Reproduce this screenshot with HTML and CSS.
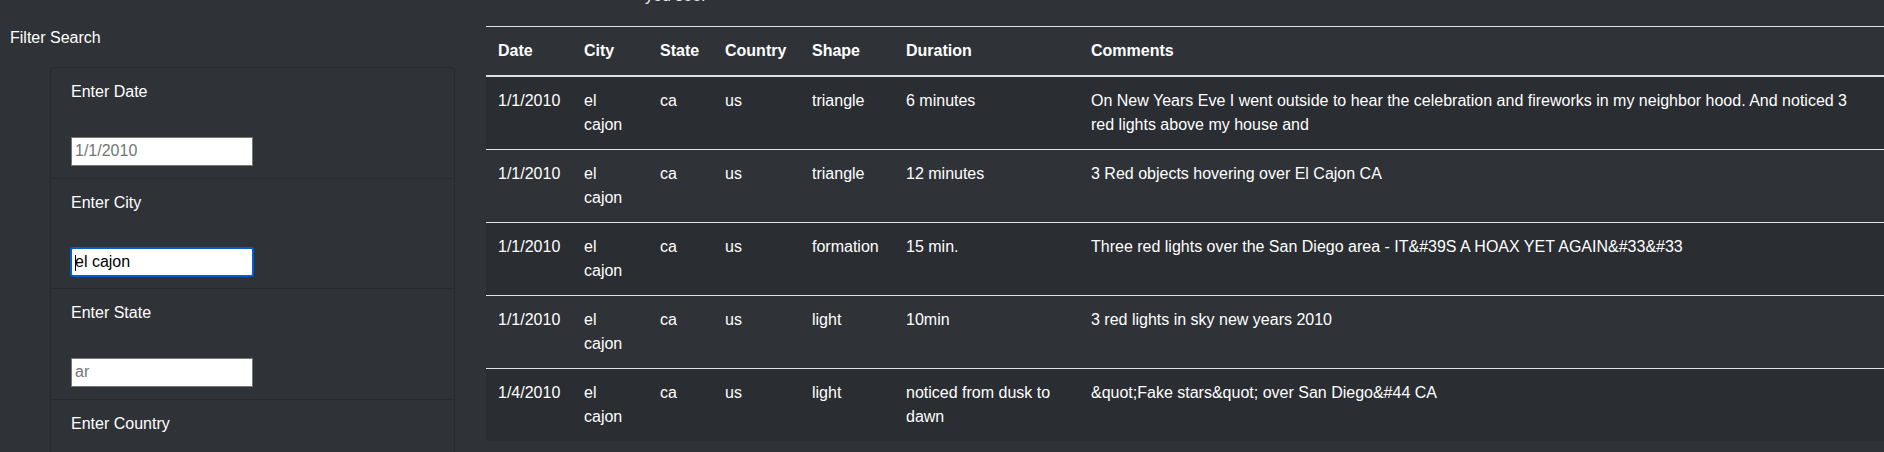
FILE: index.html
```html
<!DOCTYPE html>
<html lang="en">
<head>
<meta charset="utf-8">
<title>UFO Sightings</title>
<link rel="stylesheet" href="styles.css">
</head>
<body>
<div class="page">
  <aside class="sidebar">
    <div class="sidebar-title">Filter Search</div>
    <ul class="filters">
      <li class="filter-item">
        <label class="filter-label" for="datetime">Enter Date</label>
        <input class="filter-input" id="datetime" type="text" placeholder="1/1/2010">
      </li>
      <li class="filter-item">
        <label class="filter-label" for="city">Enter City</label>
        <div class="input-wrap">
          <input class="filter-input focused" id="city" type="text" value="el cajon">
          <span class="caret"></span>
        </div>
      </li>
      <li class="filter-item">
        <label class="filter-label" for="state">Enter State</label>
        <input class="filter-input" id="state" type="text" placeholder="ar">
      </li>
      <li class="filter-item">
        <label class="filter-label" for="country">Enter Country</label>
        <input class="filter-input" id="country" type="text" placeholder="us">
      </li>
    </ul>
  </aside>
  <main class="content">
    <p class="intro">you see.</p>
    <table class="ufo-table">
      <colgroup>
        <col class="c-date"><col class="c-city"><col class="c-state"><col class="c-country"><col class="c-shape"><col class="c-duration"><col class="c-comments">
      </colgroup>
      <thead>
        <tr><th>Date</th><th>City</th><th>State</th><th>Country</th><th>Shape</th><th>Duration</th><th>Comments</th></tr>
      </thead>
      <tbody>
        <tr><td>1/1/2010</td><td>el cajon</td><td>ca</td><td>us</td><td>triangle</td><td>6 minutes</td><td>On New Years Eve I went outside to hear the celebration and fireworks in my neighbor hood. And noticed 3 red lights above my house and</td></tr>
        <tr><td>1/1/2010</td><td>el cajon</td><td>ca</td><td>us</td><td>triangle</td><td>12 minutes</td><td>3 Red objects hovering over El Cajon CA</td></tr>
        <tr><td>1/1/2010</td><td>el cajon</td><td>ca</td><td>us</td><td>formation</td><td>15 min.</td><td>Three red lights over the San Diego area - IT&amp;#39S A HOAX YET AGAIN&amp;#33&amp;#33</td></tr>
        <tr><td>1/1/2010</td><td>el cajon</td><td>ca</td><td>us</td><td>light</td><td>10min</td><td>3 red lights in sky new years 2010</td></tr>
        <tr><td>1/4/2010</td><td>el cajon</td><td>ca</td><td>us</td><td>light</td><td>noticed from dusk to dawn</td><td>&amp;quot;Fake stars&amp;quot; over San Diego&amp;#44 CA</td></tr>
      </tbody>
    </table>
  </main>
</div>
</body>
</html>
```
FILE: styles.css
```css
html, body {
  margin: 0;
  padding: 0;
  height: 100%;
  overflow: hidden;
  background: #2f3337;
}
body {
  font-family: "Liberation Sans", Arial, Helvetica, sans-serif;
  font-size: 16px;
  line-height: 24px;
  color: #ffffff;
}
.page {
  display: flex;
  align-items: flex-start;
}
.sidebar {
  width: 476px;
  flex: none;
  box-sizing: border-box;
  padding: 26px 0 0 10px;
}
.sidebar-title {
  line-height: 24px;
  margin-bottom: 17px;
}
.filters {
  list-style: none;
  margin: 0 0 0 40px;
  padding: 0;
  width: 405px;
  box-sizing: border-box;
  border: 1px solid rgba(0, 0, 0, 0.16);
  border-radius: 4px;
}
.filter-item {
  display: flex;
  flex-direction: column;
  align-items: flex-start;
  gap: 33px;
  padding: 12px 20px;
  border-bottom: 1px solid rgba(0, 0, 0, 0.16);
}
.filter-label {
  line-height: 24px;
}
.filter-input {
  width: 182px;
  height: 28.5px;
  box-sizing: border-box;
  margin: 0;
  padding: 1px 3px;
  border: 1px solid #767676;
  border-radius: 0;
  background: #ffffff;
  color: #000000;
  font-family: "Liberation Sans", Arial, Helvetica, sans-serif;
  font-size: 16px;
  outline: none;
}
.filter-input::placeholder {
  color: #757575;
}
.input-wrap {
  position: relative;
}
.filter-input.focused {
  border: 2px solid #005fcc;
  border-radius: 3px;
  width: 184px;
  height: 30.5px;
  margin: -1px;
  padding: 1px 3px;
}
.caret {
  position: absolute;
  left: 4px;
  top: 7px;
  width: 1px;
  height: 16px;
  background: #000000;
}
.content {
  flex: 1;
  min-width: 0;
  padding-left: 10px;
}
.intro {
  margin: -16px 0 18px 159px;
  line-height: 24px;
  color: #e8e8e8;
}
.ufo-table {
  width: 1398px;
  table-layout: fixed;
  border-collapse: collapse;
  color: #ffffff;
}
.c-date { width: 86px; }
.c-city { width: 76px; }
.c-state { width: 65px; }
.c-country { width: 87px; }
.c-shape { width: 94px; }
.c-duration { width: 185px; }
.c-comments { width: 805px; }
.ufo-table th,
.ufo-table td {
  padding: 12px;
  text-align: left;
  vertical-align: top;
  border-top: 1px solid #dee2e6;
  line-height: 24px;
}
.ufo-table th {
  font-weight: bold;
  border-bottom: 2px solid #dee2e6;
}
.ufo-table tbody tr:nth-child(odd) {
  background: rgba(0, 0, 0, 0.1);
}
```
